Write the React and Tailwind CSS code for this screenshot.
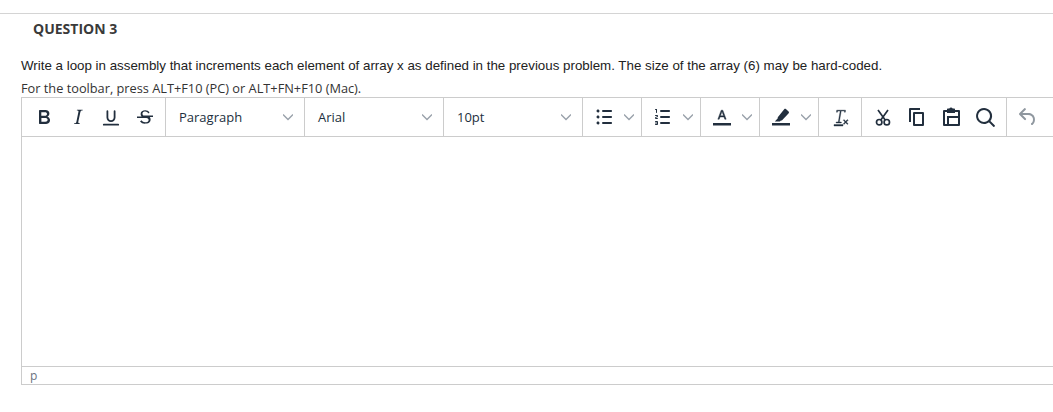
import React from "react";

const ink = "#222f3e";

function Chevron() {
  return (
    <svg width="10" height="10" viewBox="0 0 10 10" className="shrink-0">
      <path d="M0 2.5 L5 7.5 L10 2.5" fill="none" stroke="#9aa2ab" strokeWidth="1.4" />
    </svg>
  );
}

function Icon({ children }) {
  return (
    <svg width="24" height="24" viewBox="0 0 24 24" fill={ink} className="shrink-0">
      {children}
    </svg>
  );
}

function Select({ label, width }) {
  return (
    <div className={`${width} h-full flex items-center justify-between pl-[13px] pr-[11px] border-r border-[#ccc] text-[13px] text-[#222f3e]`}>
      <span className="pt-[2px]">{label}</span>
      <Chevron />
    </div>
  );
}

function SplitButton({ children }) {
  return (
    <div className="w-[59px] h-full flex items-center pl-[9px] gap-[8px] border-r border-[#ccc]">
      {children}
      <Chevron />
    </div>
  );
}

export default function App() {
  return (
    <div className="w-[1053px] h-[412px] bg-white overflow-hidden font-['Open_Sans',sans-serif]">
      <div className="h-[14px] border-b border-[#d4d4d4]"></div>

      <div className="pl-[33px] pt-[5px] text-[14px] leading-[19px] font-bold text-[#3a3a3a]">QUESTION 3</div>

      <div className="ml-[21px] mt-[20px] text-[13.33px] leading-[16px] text-[#222] font-['Liberation_Sans',sans-serif] whitespace-nowrap">
        Write a loop in assembly that increments each element of array x as defined in the previous problem. The size of the array (6) may be hard-coded.
      </div>
      <div className="ml-[21px] mt-[6px] text-[12.78px] leading-[16px] text-[#333] whitespace-nowrap">
        For the toolbar, press ALT+F10 (PC) or ALT+FN+F10 (Mac).
      </div>

      {/* Editor */}
      <div className="ml-[21px] w-[1032px] h-[288px] mt-[1px] flex flex-col border border-r-0 border-[#ccc]">
        <div className="h-[39px] flex items-center border-b border-[#ccc] shrink-0">
          <div className="w-[144px] h-full flex items-center pl-[10px] gap-[9.5px] border-r border-[#ccc]">
            <Icon><path d="M7.8 19c-.3 0-.5 0-.6-.2l-.2-.5V5.7c0-.2 0-.4.2-.5l.6-.2h5c1.5 0 2.7.3 3.5 1 .7.6 1.1 1.4 1.1 2.5a3 3 0 0 1-.6 1.9c-.4.6-1 1-1.6 1.2.4.1.9.3 1.3.6s.8.7 1 1.2c.4.4.5 1 .5 1.6 0 1.3-.4 2.3-1.3 3-.8.7-2.1 1-3.8 1H7.8zm5-8.3c.6 0 1.2-.1 1.6-.5.4-.3.6-.7.6-1.3 0-1.1-.8-1.7-2.3-1.7H9.3v3.5h3.4zm.5 6c.7 0 1.3-.1 1.7-.4.4-.4.6-.9.6-1.5s-.2-1-.7-1.4c-.4-.3-1-.4-2-.4H9.4v3.8h4z" /></Icon>
            <Icon><path d="M16.7 4.7l-.1.9h-.3c-.6 0-1 0-1.4.3-.3.3-.4.6-.5 1.1l-2.1 9.8v.6c0 .5.4.8 1.4.8h.2l-.2.8H8l.2-.8h.2c1.1 0 1.8-.5 2-1.5l2-9.8.1-.5c0-.6-.4-.8-1.4-.8h-.3l.2-.9h5.8z" /></Icon>
            <Icon><path d="M16 5c.6 0 1 .4 1 1v7c0 2.8-2.2 5-5 5s-5-2.2-5-5V6c0-.6.4-1 1-1s1 .4 1 1v7c0 1.7 1.3 3 3 3s3-1.3 3-3V6c0-.6.4-1 1-1zM4 20h16a1 1 0 0 1 0 2H4a1 1 0 0 1 0-2z" transform="translate(1.2 .8) scale(.9)" /></Icon>
            <Icon><path d="M15.6 8.5c-.5-.7-1-1.1-1.3-1.3-.6-.4-1.3-.6-2-.6-2.7 0-2.8 1.7-2.8 2.1 0 .7.3 1.1.8 1.7H20v1.6h-3.2c.6.7.8 1.5.8 2.5 0 1.4-.7 4.1-5 4.1A6.2 6.2 0 0 1 7 16.4l1.5-1.1c.4.6 1.6 2 3.7 2 1.6 0 2.5-.4 3-1 .3-.4.4-.9.4-1.3 0-1.1-.7-1.6-2.2-2H4v-1.6h4.6c-.6-.6-1-1.4-1-2.5 0-2.5 2-3.7 4.7-3.7 1.7 0 3.3.7 4.2 2.1l-.9 1.2z" /></Icon>
          </div>
          <Select label="Paragraph" width="w-[139px]" />
          <Select label="Arial" width="w-[139px]" />
          <Select label="10pt" width="w-[139px]" />
          <SplitButton>
            <Icon><path d="M11 5h8c.6 0 1 .4 1 1s-.4 1-1 1h-8a1 1 0 0 1 0-2zm0 6h8c.6 0 1 .4 1 1s-.4 1-1 1h-8a1 1 0 0 1 0-2zm0 6h8c.6 0 1 .4 1 1s-.4 1-1 1h-8a1 1 0 0 1 0-2zM4.5 6c0-.4.1-.8.4-1 .3-.4.7-.5 1.1-.5s.8.1 1 .4c.4.3.5.7.5 1.1s-.1.8-.4 1c-.3.4-.7.5-1.1.5s-.8-.1-1-.4c-.4-.3-.5-.7-.5-1.1zm0 6c0-.4.1-.8.4-1 .3-.4.7-.5 1.1-.5s.8.1 1 .4c.4.3.5.7.5 1.1s-.1.8-.4 1c-.3.4-.7.5-1.1.5s-.8-.1-1-.4c-.4-.3-.5-.7-.5-1.1zm0 6c0-.4.1-.8.4-1 .3-.4.7-.5 1.1-.5s.8.1 1 .4c.4.3.5.7.5 1.1s-.1.8-.4 1c-.3.4-.7.5-1.1.5s-.8-.1-1-.4c-.4-.3-.5-.7-.5-1.1z" /></Icon>
          </SplitButton>
          <SplitButton>
            <Icon><path d="M10 17h8c.6 0 1 .4 1 1s-.4 1-1 1h-8a1 1 0 0 1 0-2zm0-6h8c.6 0 1 .4 1 1s-.4 1-1 1h-8a1 1 0 0 1 0-2zm0-6h8c.6 0 1 .4 1 1s-.4 1-1 1h-8a1 1 0 1 1 0-2zM6 4v3.5c0 .3-.2.5-.5.5a.5.5 0 0 1-.5-.5V5h-.5a.5.5 0 0 1 0-1H6zm-1 8.8l.2.2h1.3c.3 0 .5.2.5.5s-.2.5-.5.5H4.9a1 1 0 0 1-.9-1V13c0-.4.3-.8.6-1l1.2-.4.2-.3a.2.2 0 0 0-.2-.2H4.5a.5.5 0 0 1-.5-.5c0-.3.2-.5.5-.5h1.6c.5 0 .9.4.9 1v.1c0 .4-.3.8-.6 1l-1.2.4-.2.3zM7 17v2c0 .6-.4 1-1 1H4.5a.5.5 0 0 1 0-1h1.2c.2 0 .3-.1.3-.3 0-.2-.1-.3-.3-.3H4.4a.4.4 0 1 1 0-.8h1.3c.2 0 .3-.1.3-.3 0-.2-.1-.3-.3-.3H4.5a.5.5 0 1 1 0-1H6c.6 0 1 .4 1 1z" /></Icon>
          </SplitButton>
          <SplitButton>
            <Icon>
              <path d="M9.8 15.5L8.9 18H7.4l3.7-10h1.8l3.7 10h-1.5l-.9-2.5H9.8zm.5-1.3h3.4l-1.7-4.7-1.7 4.7z" transform="translate(1.2 -2) scale(.9)" stroke={ink} strokeWidth=".5" />
              <rect x="3" y="18" width="18" height="2.5" />
            </Icon>
          </SplitButton>
          <SplitButton>
            <Icon>
              <path d="M15.2 4.2c.5-.5 1.2-.5 1.7-.1l2.7 2.4c.5.5.5 1.2.1 1.7l-6.6 7c-.3.3-.8.4-1.2.3l-1 1H5.8l3-3.3c-.2-.4-.1-.9.2-1.2z" />
              <rect x="3" y="18" width="18" height="2.5" />
            </Icon>
          </SplitButton>
          <div className="w-[43px] h-full flex items-center justify-center border-r border-[#ccc]">
            <Icon><path d="M13.2 6l-1.9 11h1.7c.3 0 .5.2.5.5s-.2.5-.5.5H8.5a.5.5 0 0 1 0-1h1.8l1.9-11H10c-.3 0-.5.4-.5.7l-.1.5H8.5l.2-2h8.8l-.2 2h-.9l.1-.5c0-.3-.2-.7-.5-.7h-2.8zM6 19.6h9v1.4H6zM15.3 15.3l.7-.7 1.7 1.7 1.7-1.7.7.7-1.7 1.7 1.7 1.7-.7.7-1.7-1.7-1.7 1.7-.7-.7 1.7-1.7z" stroke={ink} strokeWidth=".4" /></Icon>
          </div>
          <div className="w-[145px] h-full flex items-center pl-[9px] gap-[10px] border-r border-[#ccc]">
            <Icon>
              <g fill="none" stroke={ink} strokeWidth="1.7">
                <circle cx="8.2" cy="17.2" r="2.7" />
                <circle cx="15.8" cy="17.2" r="2.7" />
                <path d="M9.8 15 L17 5 M14.2 15 L7 5" />
              </g>
            </Icon>
            <Icon><path d="M9 7h9a1 1 0 0 1 1 1v12a1 1 0 0 1-1 1H9a1 1 0 0 1-1-1V8a1 1 0 0 1 1-1zm1 2v10h7V9h-7zM5 3h10v2H6v12H4V4a1 1 0 0 1 1-1z" /></Icon>
            <Icon><path d="M9 3.5h1.3a2 2 0 0 1 3.4 0H15c.6 0 1 .4 1 1V5h4a1 1 0 0 1 1 1v14a1 1 0 0 1-1 1H5a1 1 0 0 1-1-1V6a1 1 0 0 1 1-1h3v-.5c0-.6.4-1 1-1zM6 7v12h2v-8h11V7h-3v1H8V7H6zm4 6v6h9v-6h-9z" /></Icon>
            <Icon><path d="M16 17.3a8 8 0 1 1 1.4-1.4l4.3 4.4a1 1 0 0 1-1.4 1.4l-4.4-4.4zm-5-.3a6 6 0 1 0 0-12 6 6 0 0 0 0 12z" /></Icon>
          </div>
          <div className="pl-[9px] flex items-center">
            <svg width="24" height="24" viewBox="0 0 24 24" fill="#8f979f"><path d="M6.4 8H12c3.7 0 6.2 2 6.8 5.1.6 2.7-.4 5.6-2.3 6.8a1 1 0 0 1-1-1.8c1.1-.6 1.8-2.7 1.4-4.6-.5-2.1-2.1-3.5-4.9-3.5H6.4l3.3 3.3a1 1 0 1 1-1.4 1.4l-5-5a1 1 0 0 1 0-1.4l5-5a1 1 0 0 1 1.4 1.4L6.4 8z" /></svg>
          </div>
        </div>

        <div className="flex-1"></div>

        <div className="h-[18px] shrink-0 border-t border-[#ccc] pl-[8px] text-[12px] leading-[17px] text-[#6b7280]">p</div>
      </div>
    </div>
  );
}
